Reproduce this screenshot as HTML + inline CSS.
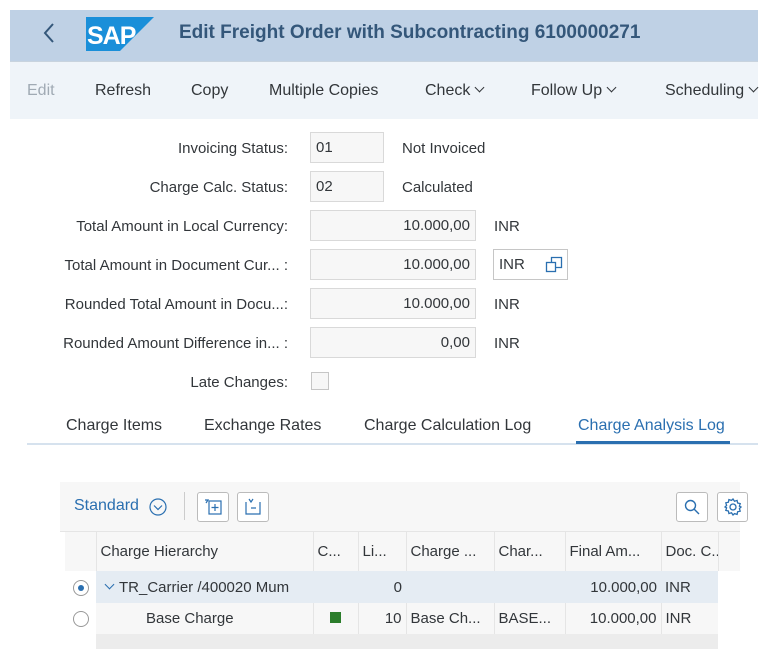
<!DOCTYPE html>
<html><head><style>
*{margin:0;padding:0;box-sizing:border-box}
body{width:768px;height:667px;background:#fff;font-family:"Liberation Sans",sans-serif;position:relative;overflow:hidden;color:#32363a}
.a{position:absolute;white-space:nowrap}
.hdr{left:10px;top:10px;width:748px;height:51px;background:#bfd1e5}
.tb{left:10px;top:61px;width:748px;height:58px;background:#eff4f9;border-top:1px solid #c8d3de}
.tbt{top:82px;font-size:16px;color:#32363a}
.lbl{font-size:15px;color:#32363a;right:480px;text-align:right}
.fld{background:#f7f7f7;border:1px solid #d9d9d9;height:31px;left:310px;font-size:15px;padding:6px 5px}
.fl{width:166px;text-align:right}
.fs{width:74px}
.txt{font-size:15px}
.tab{top:417px;font-size:16px;color:#32363a}
.chev{display:inline-block;width:7px;height:7px;border-right:1.2px solid #32363a;border-bottom:1.2px solid #32363a;transform:rotate(45deg);margin-left:6px;vertical-align:4px}
th,td{font-weight:normal;text-align:left;font-size:15px;white-space:nowrap;overflow:hidden;padding:0 4px}
</style></head><body>
<div class="a hdr"></div>
<svg class="a" style="left:42px;top:22px" width="14" height="22" fill="none" stroke="#34577a" stroke-width="2"><path d="M11 2L3 11l8 9"/></svg>
<svg class="a" style="left:86px;top:17px" width="68" height="34"><polygon points="0,0 68,0 34,34 0,34" fill="#1a8fd9"/><text x="1" y="27" font-family="Liberation Sans" font-weight="bold" font-size="25" fill="#fff" letter-spacing="-1">SAP</text></svg>
<div class="a" style="left:179px;top:22px;font-size:19px;font-weight:bold;color:#34577a">Edit Freight Order with Subcontracting 6100000271</div>
<div class="a tb"></div>
<div class="a tbt" style="left:27px;color:#a0aab4">Edit</div>
<div class="a tbt" style="left:95px">Refresh</div>
<div class="a tbt" style="left:191px">Copy</div>
<div class="a tbt" style="left:269px">Multiple Copies</div>
<div class="a tbt" style="left:425px">Check<span class="chev"></span></div>
<div class="a tbt" style="left:531px">Follow Up<span class="chev"></span></div>
<div class="a tbt" style="left:665px">Scheduling<span class="chev"></span></div>

<div class="a lbl" style="top:140px">Invoicing Status:</div>
<div class="a lbl" style="top:179px">Charge Calc. Status:</div>
<div class="a lbl" style="top:218px">Total Amount in Local Currency:</div>
<div class="a lbl" style="top:257px">Total Amount in Document Cur... :</div>
<div class="a lbl" style="top:296px">Rounded Total Amount in Docu...:</div>
<div class="a lbl" style="top:335px">Rounded Amount Difference in... :</div>
<div class="a lbl" style="top:374px">Late Changes:</div>

<div class="a fld fs" style="top:132px">01</div>
<div class="a fld fs" style="top:171px">02</div>
<div class="a fld fl" style="top:210px">10.000,00</div>
<div class="a fld fl" style="top:249px">10.000,00</div>
<div class="a fld fl" style="top:288px">10.000,00</div>
<div class="a fld fl" style="top:327px">0,00</div>
<div class="a" style="left:311px;top:372px;width:18px;height:18px;border:1px solid #c6c6c6;background:#f7f7f7"></div>
<div class="a txt" style="left:402px;top:140px">Not Invoiced</div>
<div class="a txt" style="left:402px;top:179px">Calculated</div>
<div class="a txt" style="left:494px;top:218px">INR</div>
<div class="a" style="left:493px;top:249px;width:75px;height:31px;border:1px solid #c6c6c6;font-size:15px;padding:6px 5px">INR</div>
<svg class="a" style="left:545px;top:256px" width="18" height="18" fill="none" stroke="#2a6fb0" stroke-width="1.3"><rect x="1.5" y="6.5" width="9" height="9"/><path d="M6.5 6.5V1.5h10v10h-6"/></svg>
<div class="a txt" style="left:494px;top:296px">INR</div>
<div class="a txt" style="left:494px;top:335px">INR</div>

<div class="a" style="left:27px;top:443px;width:731px;height:2px;background:#d6e2ee"></div>
<div class="a tab" style="left:66px">Charge Items</div>
<div class="a tab" style="left:204px">Exchange Rates</div>
<div class="a tab" style="left:364px">Charge Calculation Log</div>
<div class="a tab" style="left:578px;color:#2a6fb0">Charge Analysis Log</div>
<div class="a" style="left:576px;top:441px;width:154px;height:3px;background:#2a6fb0"></div>

<div class="a" style="left:60px;top:482px;width:680px;height:50px;background:#f7f7f7;border-bottom:1px solid #e5e5e5"></div>
<div class="a" style="left:74px;top:497px;font-size:16px;color:#2a6fb0">Standard</div>
<svg class="a" style="left:148px;top:497px" width="20" height="20" fill="none" stroke="#2a6fb0" stroke-width="1.2"><circle cx="10" cy="10" r="8"/><path d="M6 8.5l4 4 4-4"/></svg>
<div class="a" style="left:184px;top:492px;width:1px;height:28px;background:#ccc"></div>
<div class="a" style="left:197px;top:492px;width:32px;height:30px;border:1px solid #bbb;border-radius:3px;background:#fff"></div>
<svg class="a" style="left:203px;top:497px" width="20" height="20" fill="none" stroke="#2a6fb0" stroke-width="1.2"><rect x="6" y="4" width="12" height="13"/><path d="M12 7v7M8.5 10.5h7M2 3h3l-2 3"/></svg>
<div class="a" style="left:237px;top:492px;width:32px;height:30px;border:1px solid #bbb;border-radius:3px;background:#fff"></div>
<svg class="a" style="left:243px;top:497px" width="20" height="20" fill="none" stroke="#2a6fb0" stroke-width="1.2"><path d="M3 5v12h14V5M8 11h5M6 2l2 3 2-3"/></svg>
<div class="a" style="left:676px;top:492px;width:32px;height:30px;border:1px solid #bbb;border-radius:3px;background:#fff"></div>
<svg class="a" style="left:682px;top:497px" width="20" height="20" fill="none" stroke="#2a6fb0" stroke-width="1.4"><circle cx="8.5" cy="8.5" r="5"/><path d="M12 12l5 5"/></svg>
<div class="a" style="left:717px;top:492px;width:31px;height:30px;border:1px solid #bbb;border-radius:3px;background:#fff"></div>
<svg class="a" style="left:723px;top:497px" width="20" height="20" fill="none" stroke="#2a6fb0" stroke-width="1.3"><circle cx="10" cy="10" r="3"/><path d="M10 2l1.5 2.2 2.6-.8.5 2.6 2.6.6-.8 2.6L18 10l-1.6 1.6.8 2.6-2.6.6-.5 2.6-2.6-.8L10 18l-1.5-2.2-2.6.8-.5-2.6-2.6-.6.8-2.6L2 10l1.6-1.6-.8-2.6 2.6-.6.5-2.6 2.6.8z"/></svg>

<table class="a" style="left:65px;top:532px;border-collapse:collapse;table-layout:fixed;width:675px">
<colgroup><col width="31"><col width="217"><col width="45"><col width="48"><col width="88"><col width="71"><col width="96"><col width="57"><col width="22"></colgroup>
<tr style="height:39px;background:#f7f7f7"><td style="border-right:1px solid #e5e5e5"></td><td style="border-right:1px solid #e5e5e5">Charge Hierarchy</td><td style="border-right:1px solid #e5e5e5">C...</td><td style="border-right:1px solid #e5e5e5">Li...</td><td style="border-right:1px solid #e5e5e5">Charge ...</td><td style="border-right:1px solid #e5e5e5">Char...</td><td style="border-right:1px solid #e5e5e5">Final Am...</td><td style="border-right:1px solid #e5e5e5">Doc. C...</td><td></td></tr>
<tr style="height:32px;background:#e5ecf3"><td style="background:#fff;text-align:center"><span style="display:inline-block;width:16px;height:16px;border:1px solid #999;border-radius:50%;vertical-align:middle;position:relative"><span style="position:absolute;left:4px;top:4px;width:6px;height:6px;border-radius:50%;background:#2a6fb0"></span></span></td><td style="padding-left:10px"><span style="display:inline-block;width:7px;height:7px;border-right:1.5px solid #2a6fb0;border-bottom:1.5px solid #2a6fb0;transform:rotate(45deg);vertical-align:4px;margin-right:6px"></span>TR_Carrier /400020 Mum</td><td></td><td style="text-align:right">0</td><td></td><td></td><td style="text-align:right">10.000,00</td><td>INR</td><td style="background:#fff"></td></tr>
<tr style="height:31px;background:#f7f7f7"><td style="background:#fff;text-align:center"><span style="display:inline-block;width:16px;height:16px;border:1px solid #999;border-radius:50%;vertical-align:middle"></span></td><td style="padding-left:50px;border-right:1px solid #e5e5e5">Base Charge</td><td style="border-right:1px solid #e5e5e5;text-align:center"><span style="display:inline-block;width:11px;height:11px;background:#2b7d2b"></span></td><td style="text-align:right;border-right:1px solid #e5e5e5">10</td><td style="border-right:1px solid #e5e5e5">Base Ch...</td><td style="border-right:1px solid #e5e5e5">BASE...</td><td style="text-align:right;border-right:1px solid #e5e5e5">10.000,00</td><td>INR</td><td style="background:#fff"></td></tr>
<tr style="height:15px;background:#ececec"><td style="background:#fff"></td><td colspan="7"></td><td style="background:#fff"></td></tr>
</table>
</body></html>
